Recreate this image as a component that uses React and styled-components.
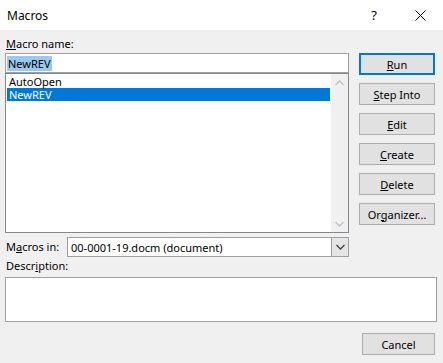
import styled, { createGlobalStyle, css } from "styled-components";

const GlobalStyle = createGlobalStyle`
  html, body {
    margin: 0;
    padding: 0;
    background: #f0f0f0;
  }
  body {
    font-family: "Noto Sans", "Open Sans", sans-serif;
    font-size: 11px;
    color: #000;
  }
  * { box-sizing: border-box; }
`;

const Dialog = styled.div`
  width: 443px;
  height: 363px;
  background: #f0f0f0;
  display: flex;
  flex-direction: column;
  overflow: hidden;
`;

const TitleBar = styled.div`
  height: 30px;
  background: #fff;
  display: flex;
  align-items: center;
  padding-left: 7px;
`;

const Title = styled.div`
  font-size: 12px;
  color: #000;
  flex: 1;
`;

const CaptionButton = styled.div`
  width: 46px;
  height: 30px;
  display: flex;
  align-items: center;
  justify-content: center;
  font-size: 13px;
`;

const Body = styled.div`
  flex: 1;
  padding: 0 6px 0 5px;
  display: flex;
  flex-direction: column;
`;

const Label = styled.div`
  line-height: 14px;
  padding: ${(p) => p.$pad || "0 0 0 1px"};
  white-space: nowrap;
`;

const MainRow = styled.div`
  display: grid;
  grid-template-columns: 344px 76px;
  column-gap: 10px;
`;

const LeftCol = styled.div`
  display: flex;
  flex-direction: column;
`;

const TextBox = styled.div`
  height: 20px;
  background: #fff;
  border: 1px solid #a0a0a0;
  display: flex;
  align-items: center;
  padding-left: 1px;
`;

const Selected = styled.span`
  background: #99c9ef;
  line-height: 15px;
  padding: 0 1px;
`;

const ListBox = styled.div`
  height: 160px;
  background: #fff;
  border: 1px solid #828790;
  display: flex;
`;

const Items = styled.div`
  flex: 1;
  padding: 1px;
`;

const Item = styled.div`
  height: 13px;
  line-height: 13px;
  padding-left: 2px;
  ${(p) =>
    p.$selected &&
    css`
      background: #0078d7;
      color: #fff;
    `}
`;

const ScrollBar = styled.div`
  width: 17px;
  background: #f0f0f0;
  display: flex;
  flex-direction: column;
  justify-content: space-between;
`;

const ScrollArrow = styled.div`
  height: 17px;
  display: flex;
  align-items: center;
  justify-content: center;
`;

const ButtonCol = styled.div`
  display: flex;
  flex-direction: column;
  gap: 8px;
`;

const Button = styled.div`
  height: 22px;
  width: ${(p) => p.$width || "76px"};
  background: #e1e1e1;
  border: 1px solid #adadad;
  display: flex;
  align-items: center;
  justify-content: center;
  ${(p) =>
    p.$default &&
    css`
      border: 2px solid #0078d7;
    `}
`;

const MacrosInRow = styled.div`
  margin-top: 4px;
  width: 344px;
  display: grid;
  grid-template-columns: 62px 1fr;
  align-items: center;
`;

const Combo = styled.div`
  height: 20px;
  background: #fff;
  border: 1px solid #a0a0a0;
  display: flex;
  align-items: stretch;
`;

const ComboText = styled.div`
  flex: 1;
  padding-left: 3px;
  display: flex;
  align-items: center;
`;

const ComboButton = styled.div`
  width: 17px;
  background: #e5e5e5;
  border-left: 1px solid #a0a0a0;
  display: flex;
  align-items: center;
  justify-content: center;
`;

const DescBox = styled.div`
  height: 45px;
  background: #fff;
  border: 1px solid #a0a0a0;
  margin-top: 4px;
`;

const Footer = styled.div`
  margin-top: 11px;
  display: flex;
  justify-content: flex-end;
  padding-right: 2px;
`;

const Chevron = ({ up, color = "#c0c0c0" }) => (
  <svg width="9" height="6" viewBox="0 0 9 6">
    <path
      d={up ? "M0.5 5 L4.5 1 L8.5 5" : "M0.5 1 L4.5 5 L8.5 1"}
      fill="none"
      stroke={color}
      strokeWidth="1.3"
    />
  </svg>
);

const buttons = [
  { pre: "", key: "R", post: "un", def: true },
  { pre: "", key: "S", post: "tep Into" },
  { pre: "", key: "E", post: "dit" },
  { pre: "", key: "C", post: "reate" },
  { pre: "", key: "D", post: "elete" },
  { pre: "Or", key: "g", post: "anizer..." },
];

const App = () => {
  return (
    <>
      <GlobalStyle />
      <Dialog>
        <TitleBar>
          <Title>Macros</Title>
          <CaptionButton>?</CaptionButton>
          <CaptionButton>
            <svg width="11" height="11" viewBox="0 0 11 11">
              <path d="M0.5 0.5 L10.5 10.5 M10.5 0.5 L0.5 10.5" stroke="#000" strokeWidth="1" />
            </svg>
          </CaptionButton>
        </TitleBar>
        <Body>
          <Label $pad="7px 0 2px 1px">
            <u>M</u>acro name:
          </Label>
          <MainRow>
            <LeftCol>
              <TextBox>
                <Selected>NewREV</Selected>
              </TextBox>
              <ListBox>
                <Items>
                  <Item>AutoOpen</Item>
                  <Item $selected>NewREV</Item>
                </Items>
                <ScrollBar>
                  <ScrollArrow>
                    <Chevron up />
                  </ScrollArrow>
                  <ScrollArrow>
                    <Chevron />
                  </ScrollArrow>
                </ScrollBar>
              </ListBox>
            </LeftCol>
            <ButtonCol>
              {buttons.map((b) => (
                <Button key={b.key} $default={b.def}>
                  {b.pre}
                  <u>{b.key}</u>
                  {b.post}
                </Button>
              ))}
            </ButtonCol>
          </MainRow>
          <MacrosInRow>
            <Label>
              M<u>a</u>cros in:
            </Label>
            <Combo>
              <ComboText>00-0001-19.docm (document)</ComboText>
              <ComboButton>
                <Chevron color="#404040" />
              </ComboButton>
            </Combo>
          </MacrosInRow>
          <Label $pad="2px 0 0 1px">
            Descr<u>i</u>ption:
          </Label>
          <DescBox />
          <Footer>
            <Button $width="73px">Cancel</Button>
          </Footer>
        </Body>
      </Dialog>
    </>
  );
};

export default App;
